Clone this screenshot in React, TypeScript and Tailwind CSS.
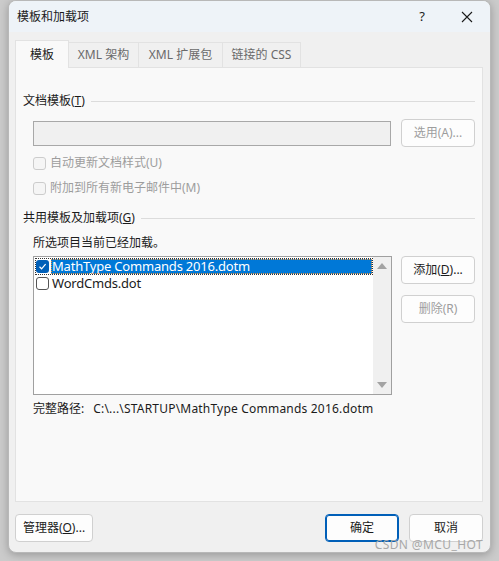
import React from "react";

const FONT = '"Noto Sans", "Noto Sans CJK SC", sans-serif';

function Btn({ children, disabled, primary, className = "" }: { children: React.ReactNode; disabled?: boolean; primary?: boolean; className?: string }) {
  return (
    <div
      className={`flex items-center justify-center h-[28px] rounded-[4px] bg-[#fdfdfd] text-[12px] ${
        primary ? "border border-[#005fb8] shadow-[inset_0_0_0_1px_#005fb8]" : "border border-[#d0d0d0]"
      } ${disabled ? "text-[#9d9d9d]" : "text-[#1b1b1b]"} ${className}`}
    >
      {children}
    </div>
  );
}

function Heading({ children }: { children: React.ReactNode }) {
  return (
    <div className="flex items-center h-[18px] pl-[7px] pr-[7px]">
      <span className="text-[12px] text-[#1b1b1b] whitespace-nowrap">{children}</span>
      <div className="flex-1 h-px bg-[#dcdcdc] ml-[6px]" />
    </div>
  );
}

function DisabledCheck({ label, mt }: { label: string; mt: string }) {
  return (
    <div className={`flex items-center h-[16px] pl-[17px] ${mt}`}>
      <div className="w-[13px] h-[13px] rounded-[3px] border border-[#cccccc] bg-[#f5f5f5]" />
      <span className="ml-[4px] text-[12px] text-[#9d9d9d]">{label}</span>
    </div>
  );
}

export default function App() {
  return (
    <div className="w-[499px] h-[561px] bg-[#cbcbcb] overflow-hidden" style={{ fontFamily: FONT }}>
      <div className="relative ml-[8px] w-[483px] h-[553px] rounded-[8px] bg-[#f0f0f0] border border-[#b8b8b8] shadow-[0_2px_8px_rgba(0,0,0,0.25)] overflow-hidden flex flex-col">
        {/* Title bar */}
        <div className="h-[31px] bg-[#eef3f8] flex items-center pl-[8px] shrink-0">
          <span className="text-[12px] text-[#1b1b1b]">模板和加载项</span>
          <div className="flex-1" />
          <span className="text-[13px] text-[#1b1b1b] mr-[36px]">?</span>
          <svg width="12" height="12" viewBox="0 0 12 12" className="mr-[17px]">
            <path d="M1 1 L11 11 M11 1 L1 11" stroke="#1b1b1b" strokeWidth="1.1" />
          </svg>
        </div>

        {/* Tabs */}
        <div className="flex items-end pl-[6px] mt-[8px] h-[27px] shrink-0 relative z-10">
          <div className="h-[28px] w-[54px] bg-[#f9f9f9] border border-[#e2e2e2] border-b-0 flex items-center justify-center text-[12px] text-[#1b1b1b] -mb-px">
            模板
          </div>
          <div className="h-[25px] w-[70px] bg-[#f0f0f0] border border-[#e2e2e2] border-l-0 border-b-0 flex items-center justify-center text-[12px] text-[#6a6a6a]">
            XML 架构
          </div>
          <div className="h-[25px] w-[84px] bg-[#f0f0f0] border border-[#e2e2e2] border-l-0 border-b-0 flex items-center justify-center text-[12px] text-[#6a6a6a]">
            XML 扩展包
          </div>
          <div className="h-[25px] w-[78px] bg-[#f0f0f0] border border-[#e2e2e2] border-l-0 border-b-0 flex items-center justify-center text-[12px] text-[#6a6a6a]">
            链接的 CSS
          </div>
        </div>

        {/* Panel */}
        <div className="ml-[6px] w-[468px] h-[435px] bg-[#f9f9f9] border border-[#e2e2e2] flex flex-col shrink-0">
          <div className="mt-[24px]">
            <Heading>
              文档模板(<span className="underline">T</span>)
            </Heading>
          </div>
          <div className="mt-[9px] flex items-center h-[28px] pl-[17px] pr-[7px]">
            <div className="w-[358px] h-[25px] bg-[#f0f0f0] border border-[#a8a8a8]" />
            <div className="flex-1" />
            <Btn disabled className="w-[74px]">选用(A)...</Btn>
          </div>
          <DisabledCheck label="自动更新文档样式(U)" mt="mt-[8px]" />
          <DisabledCheck label="附加到所有新电子邮件中(M)" mt="mt-[9px]" />
          <div className="mt-[13px]">
            <Heading>
              共用模板及加载项(<span className="underline">G</span>)
            </Heading>
          </div>
          <div className="mt-[7px] h-[18px] pl-[17px] flex items-center text-[12px] text-[#1b1b1b]">所选项目当前已经加载。</div>
          <div className="mt-[4px] flex pl-[17px] pr-[7px]">
            {/* List box */}
            <div className="w-[359px] h-[139px] bg-white border border-[#a0a0a0] flex">
              <div className="flex-1 flex flex-col pt-[1px] pl-[1px]">
                <div className="h-[17px] flex items-center border border-dotted border-[#333333]">
                  <div className="w-[13px] h-[13px] rounded-[3px] bg-[#005fb8] flex items-center justify-center">
                    <svg width="9" height="9" viewBox="0 0 9 9">
                      <path d="M1.5 4.8 L3.6 6.8 L7.6 2.2" stroke="white" strokeWidth="1.2" fill="none" />
                    </svg>
                  </div>
                  <div className="flex-1 h-full ml-[2px] bg-[#0078d7] flex items-center text-[13px] text-white outline outline-1 outline-dotted outline-[#e8913a] -outline-offset-1">
                    <span className="pl-[1px] tracking-[-0.2px]">MathType Commands 2016.dotm</span>
                  </div>
                </div>
                <div className="h-[17px] flex items-center">
                  <div className="w-[13px] h-[13px] rounded-[3px] border border-[#555555] bg-white ml-[1px]" />
                  <span className="ml-[3px] text-[13px] text-[#1b1b1b] tracking-[-0.2px]">WordCmds.dot</span>
                </div>
              </div>
              <div className="w-[18px] h-full bg-[#f0f0f0] flex flex-col items-center justify-between py-[6px]">
                <svg width="10" height="6" viewBox="0 0 10 6">
                  <path d="M0 6 L5 0 L10 6 Z" fill="#a3a3a3" />
                </svg>
                <svg width="10" height="6" viewBox="0 0 10 6">
                  <path d="M0 0 L10 0 L5 6 Z" fill="#a3a3a3" />
                </svg>
              </div>
            </div>
            <div className="flex-1" />
            <div className="flex flex-col w-[74px]">
              <Btn>
                添加(<span className="underline">D</span>)...
              </Btn>
              <Btn disabled className="mt-[11px]">删除(R)</Btn>
            </div>
          </div>
          <div className="mt-[5px] h-[18px] pl-[17px] flex items-center text-[12px] text-[#1b1b1b] whitespace-nowrap">
            <span>完整路径:</span>
            <span className="ml-[9px] tracking-[0.2px]">C:\...\STARTUP\MathType Commands 2016.dotm</span>
          </div>
        </div>

        {/* Bottom buttons */}
        <div className="mt-[12px] flex pl-[6px] pr-[7px]">
          <Btn className="w-[78px]">
            管理器(<span className="underline">O</span>)...
          </Btn>
          <div className="flex-1" />
          <Btn primary className="w-[74px]">确定</Btn>
          <Btn className="w-[74px] ml-[10px]">取消</Btn>
        </div>

        <div className="absolute right-[7px] bottom-[1px] text-[12px] leading-[12px] text-[#a8a8a8] tracking-[0.4px]">CSDN @MCU_HOT</div>
      </div>
    </div>
  );
}
